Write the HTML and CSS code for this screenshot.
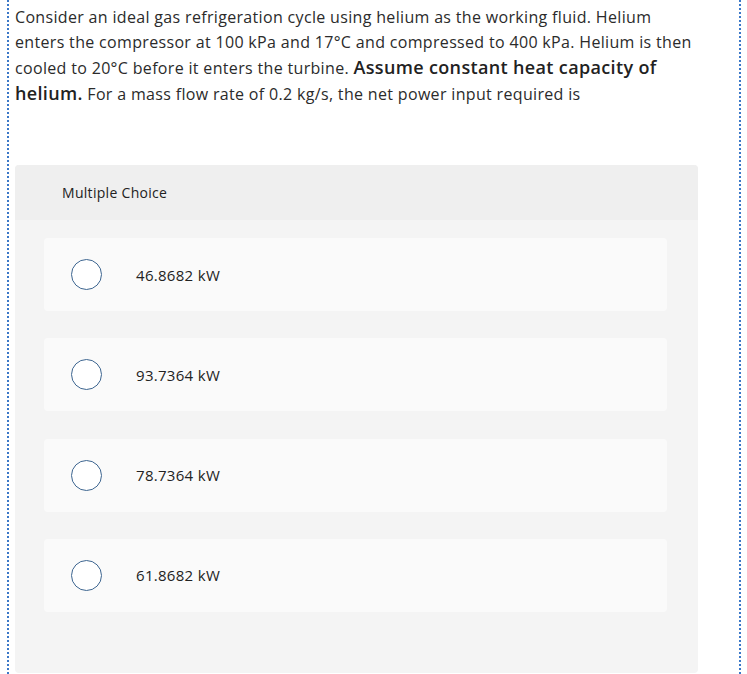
FILE: index.html
```html
<!DOCTYPE html>
<html>
<head>
<meta charset="utf-8">
<link rel="stylesheet" href="styles.css">
</head>
<body>
<div class="frame">
  <p class="question">Consider an ideal gas refrigeration cycle using helium as the working fluid. Helium enters the compressor at 100 kPa and 17°C and compressed to 400 kPa. Helium is then cooled to 20°C before it enters the turbine. <strong>Assume constant heat capacity of helium.</strong> For a mass flow rate of 0.2 kg/s, the net power input required is</p>
  <div class="panel">
    <div class="panel-head">Multiple Choice</div>
    <div class="choices">
      <div class="choice"><span class="radio"></span><span class="label">46.8682 kW</span></div>
      <div class="choice"><span class="radio"></span><span class="label">93.7364 kW</span></div>
      <div class="choice"><span class="radio"></span><span class="label">78.7364 kW</span></div>
      <div class="choice"><span class="radio"></span><span class="label">61.8682 kW</span></div>
    </div>
  </div>
</div>
</body>
</html>
```
FILE: styles.css
```css
html, body {
  margin: 0;
  padding: 0;
  background: #ffffff;
}
body {
  font-family: "Open Sans", "Lato", sans-serif;
  color: #2b2b2b;
}
.frame {
  margin-left: 7px;
  width: 734px;
  min-height: 674px;
  border-left: 2px dotted #3b78c8;
  border-right: 2px dotted #3b78c8;
  padding: 0 0 0 6px;
  box-sizing: border-box;
}
.question {
  margin: 0;
  padding-top: 5px;
  font-size: 16px;
  letter-spacing: 0.33px;
  line-height: 25px;
  width: 690px;
}
.question strong {
  font-size: 18px;
  font-weight: 600;
  letter-spacing: 0.35px;
  color: #222;
}
.panel {
  margin-top: 58px;
  width: 683px;
  height: 508px;
  background: #f4f4f4;
  border-radius: 4px;
  overflow: hidden;
}
.panel-head {
  height: 55px;
  background: #efefef;
  padding-left: 47px;
  font-size: 14px;
  letter-spacing: 0.3px;
  line-height: 55px;
  color: #222;
}
.choices {
  padding: 18px 31px 0 29px;
  display: flex;
  flex-direction: column;
  gap: 27.3px;
}
.choice {
  height: 73px;
  background: #fafafa;
  border-radius: 4px;
  display: flex;
  align-items: center;
  padding-left: 27px;
}
.radio {
  width: 29px;
  height: 29px;
  border: 1px solid #3d6590;
  border-radius: 50%;
  background: #fff;
  flex: none;
}
.label {
  margin-left: 34px;
  font-size: 15px;
  letter-spacing: 0.3px;
  color: #222;
}
```
